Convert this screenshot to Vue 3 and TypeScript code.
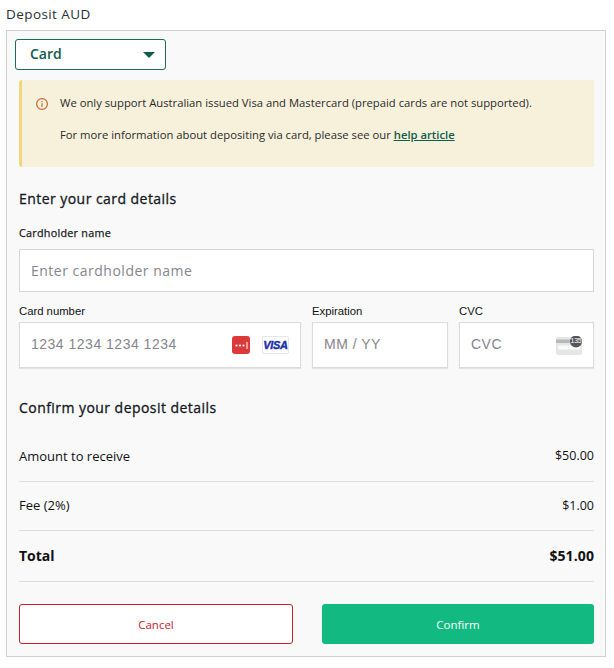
<script setup lang="ts">
interface Row { label: string; value: string; total?: boolean }
const rows: Row[] = [
  { label: 'Amount to receive', value: '$50.00' },
  { label: 'Fee (2%)', value: '$1.00' },
  { label: 'Total', value: '$51.00', total: true },
]
</script>

<template>
  <div class="page">
    <div class="title">Deposit AUD</div>
    <div class="panel">
      <div class="select">
        <span>Card</span>
        <i class="caret"></i>
      </div>
      <div class="body">
        <div class="alert">
          <svg class="info" width="14" height="14" viewBox="0 0 14 14" fill="none">
            <circle cx="7" cy="7" r="5.4" stroke="#c4682f" stroke-width="1.2" />
            <rect x="6.4" y="6.2" width="1.2" height="3.6" fill="#c4682f" />
            <rect x="6.4" y="4.1" width="1.2" height="1.2" fill="#c4682f" />
          </svg>
          <div class="alert-text">
            <p>We only support Australian issued Visa and Mastercard (prepaid cards are not supported).</p>
            <p>For more information about depositing via card, please see our <a>help article</a></p>
          </div>
        </div>

        <h3 class="h-card">Enter your card details</h3>
        <label class="label-os">Cardholder name</label>
        <div class="input name">Enter cardholder name</div>

        <div class="card-row">
          <div class="f-number">
            <label class="label-ar">Card number</label>
            <div class="input stripe">
              <span>1234 1234 1234 1234</span>
              <span class="icons">
                <svg width="18" height="18" viewBox="0 0 18 18">
                  <rect width="18" height="18" rx="3" fill="#dc3a3a" />
                  <circle cx="4.5" cy="9.5" r="1.1" fill="#fff" />
                  <circle cx="8" cy="9.5" r="1.1" fill="#fff" />
                  <circle cx="11.5" cy="9.5" r="1.1" fill="#fff" />
                  <rect x="14.5" y="6" width="1" height="7" fill="#fff" />
                </svg>
                <span class="visa"><b>VISA</b></span>
              </span>
            </div>
          </div>
          <div class="f-exp">
            <label class="label-ar">Expiration</label>
            <div class="input stripe"><span>MM / YY</span></div>
          </div>
          <div class="f-cvc">
            <label class="label-ar">CVC</label>
            <div class="input stripe">
              <span>CVC</span>
              <span class="cvc-icon">
                <svg width="27" height="20" viewBox="0 0 27 20">
                  <rect x="1" y="1" width="26" height="18" rx="2" fill="#e6e6e6" />
                  <rect x="1" y="3.5" width="26" height="3.5" fill="#b8b8b8" />
                  <rect x="3" y="9.5" width="22" height="4" fill="#fafafa" />
                  <circle cx="21" cy="5.5" r="6" fill="#55555c" />
                </svg>
                <em>135</em>
              </span>
            </div>
          </div>
        </div>

        <h3 class="h-confirm">Confirm your deposit details</h3>
        <div class="rows">
          <div v-for="r in rows" :key="r.label" class="row" :class="{ total: r.total }">
            <span class="k">{{ r.label }}</span>
            <span class="v">{{ r.value }}</span>
          </div>
        </div>

        <div class="actions">
          <button class="btn cancel">Cancel</button>
          <button class="btn confirm">Confirm</button>
        </div>
      </div>
    </div>
  </div>
</template>

<style>
html, body { margin: 0; background: #fff; }
</style>

<style scoped>
.page {
  width: 614px;
  height: 668px;
  box-sizing: border-box;
  padding: 6px 0 0 6px;
  font-family: "Open Sans", "Liberation Sans", sans-serif;
  color: #111;
  overflow: hidden;
}
.title {
  height: 24px;
  line-height: 17px;
  font-size: 13.5px;
  font-weight: 400;
  color: #2b3035;
  letter-spacing: 0.42px;
}
.panel {
  width: 600px;
  height: 627px;
  box-sizing: border-box;
  border: 1px solid #cfcfcf;
  background: #f9f9fa;
  padding: 8px 0 0 8px;
}
.select {
  width: 151px;
  height: 31px;
  box-sizing: border-box;
  border: 1px solid #1a6b59;
  border-radius: 3px;
  background: #fff;
  color: #0f5c4c;
  font-size: 14px;
  font-weight: 600;
  line-height: 28px;
  display: flex;
  align-items: center;
  justify-content: space-between;
  padding: 0 10px 2px 14px;
}
.caret {
  width: 0;
  height: 0;
  margin-top: 2px;
  border-left: 6px solid transparent;
  border-right: 6px solid transparent;
  border-top: 6px solid #0f5c4c;
}
.body {
  padding: 10px 0 0 4px;
  width: 575px;
}
.alert {
  height: 87px;
  box-sizing: border-box;
  background: #f7f1dc;
  border-left: 3px solid #f2d67e;
  border-radius: 3px 0 0 3px;
  padding: 15px 0 0 13px;
  display: flex;
  font-size: 11.27px;
  color: #2a2a2a;
}
.info { margin: 2px 11px 0 0; flex: none; }
.alert-text p {
  margin: 0 0 16px;
  line-height: 16px;
}
.alert-text a {
  color: #0f5c4c;
  font-weight: 600;
  text-decoration: underline;
}
h3 {
  margin: 0;
  font-size: 14px;
  font-weight: 400;
  line-height: 20px;
  letter-spacing: 0.45px;
  color: #15181c;
  -webkit-text-stroke: 0.3px #15181c;
}
.h-card { margin-top: 22px; }
.label-os {
  display: block;
  margin-top: 17px;
  font-size: 10.8px;
  font-weight: 400;
  line-height: 14px;
  letter-spacing: 0.25px;
  color: #1a1a1a;
  -webkit-text-stroke: 0.25px #1a1a1a;
}
.input {
  background: #fff;
  border: 1px solid #d6d6d6;
  box-sizing: border-box;
  color: #85858c;
}
.name {
  margin-top: 9px;
  height: 43px;
  line-height: 41px;
  padding-left: 11px;
  font-size: 14px;
  letter-spacing: 0.5px;
}
.card-row {
  display: flex;
  margin-top: 12px;
}
.f-number { width: 282px; margin-right: 11px; }
.f-exp { width: 136px; margin-right: 11px; }
.f-cvc { width: 135px; }
.label-ar {
  display: block;
  font-family: "Liberation Sans", Arial, sans-serif;
  font-size: 11.3px;
  line-height: 14px;
  color: #111;
  height: 18px;
}
.stripe {
  height: 46px;
  border-color: #dcdcdc;
  box-shadow: 0 1px 1px rgba(0, 0, 0, 0.08);
  font-family: "Liberation Sans", Arial, sans-serif;
  font-size: 14px;
  letter-spacing: 0.5px;
  display: flex;
  align-items: center;
  justify-content: space-between;
  padding: 0 11px;
}
.stripe > span:first-child { margin-top: -2px; }
.icons {
  display: flex;
  align-items: center;
  gap: 12px;
  margin-top: -1px;
}
.icons svg { display: block; }
.visa {
  width: 27px;
  height: 18px;
  box-sizing: border-box;
  border: 1px solid #e6e6e6;
  border-radius: 2px;
  background: #fff;
  display: flex;
  align-items: center;
  justify-content: center;
}
.visa b {
  font-family: "Liberation Sans", Arial, sans-serif;
  font-style: italic;
  font-weight: 700;
  font-size: 11px;
  letter-spacing: -0.3px;
  color: #1a2fa8;
  -webkit-text-stroke: 0.4px #1a2fa8;
}
.cvc-icon {
  position: relative;
  display: block;
  width: 27px;
  height: 20px;
  margin-top: 1px;
}
.cvc-icon svg { display: block; }
.cvc-icon em {
  position: absolute;
  left: 15px;
  top: 1.5px;
  width: 12px;
  text-align: center;
  font-style: normal;
  font-size: 7px;
  line-height: 8px;
  letter-spacing: -0.2px;
  color: #fff;
}
.h-confirm { margin-top: 30px; }
.rows { margin-top: 14px; }
.row {
  height: 49px;
  box-sizing: border-box;
  border-bottom: 1px solid #dedede;
  display: flex;
  align-items: center;
  justify-content: space-between;
  padding-bottom: 2px;
  font-size: 13px;
  color: #111;
}
.row .v { font-size: 12.5px; }
.row:first-child { height: 50px; }
.total {
  height: 51px;
  font-size: 14px;
  font-weight: 700;
  color: #111;
}
.total .v { font-size: 14px; letter-spacing: 0.1px; }
.actions {
  display: flex;
  justify-content: space-between;
  margin-top: 22px;
}
.btn {
  height: 40px;
  border-radius: 3px;
  font-family: "Open Sans", sans-serif;
  font-size: 11.5px;
  box-sizing: border-box;
  padding: 0;
}
.cancel {
  width: 274px;
  background: #fff;
  border: 1px solid #c8202c;
  color: #c8202c;
}
.confirm {
  width: 272px;
  background: #12b981;
  border: 0;
  color: #fff;
}
</style>
